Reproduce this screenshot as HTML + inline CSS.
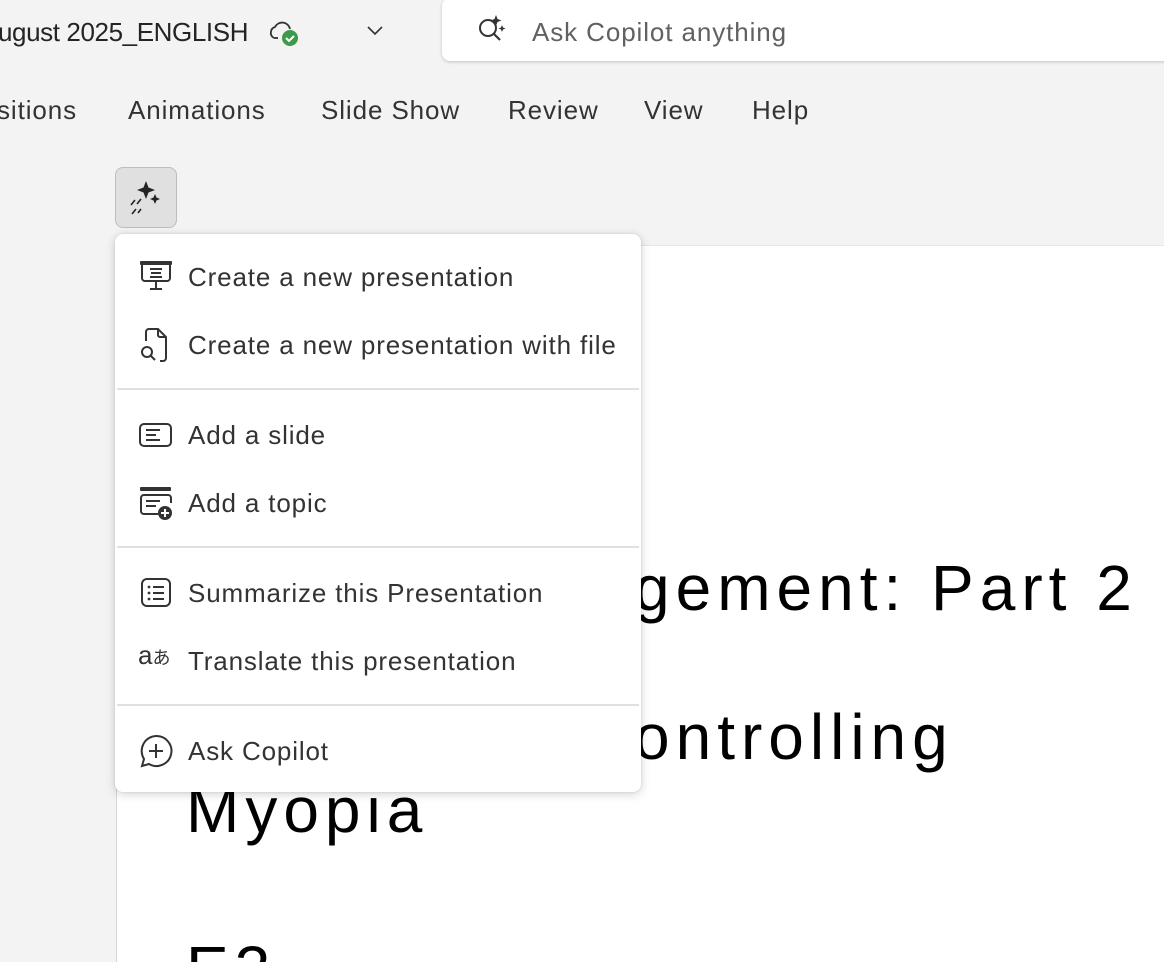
<!DOCTYPE html>
<html style="overflow:hidden;width:1164px;height:962px"><head><style>
body{margin:0;width:1164px;height:962px;overflow:hidden;background:#f3f3f3;font-family:"Segoe UI","Liberation Sans",sans-serif;position:relative;color:#242424}
.a{position:absolute;white-space:nowrap}
.t{font-size:26px;color:#333;letter-spacing:0.9px}
.slide{position:absolute;left:116px;top:245px;width:1048px;height:717px;background:#fff;border-left:1px solid #d6d6d6;border-top:1px solid #e6e6e6}
.st{position:absolute;font-size:64px;color:#000;font-family:"Liberation Sans",sans-serif;white-space:nowrap;letter-spacing:6px}
.menu{position:absolute;left:115px;top:234px;width:526px;height:558px;background:#fff;border-radius:8px;box-shadow:0 2px 10px rgba(0,0,0,.18),0 0 2px rgba(0,0,0,.12)}
.it{position:absolute;left:73px;font-size:26px;color:#333;white-space:nowrap;line-height:30px;letter-spacing:0.85px}
.ic{position:absolute;left:23px;width:36px;height:36px}
.sep{position:absolute;left:2px;right:2px;height:2px;background:#e0e0e0}
</style></head><body>
<div class="a t" style="left:-2px;top:17px;color:#242424;letter-spacing:-0.4px">ugust 2025_ENGLISH</div>
<svg class="a" style="left:266px;top:16px" width="36" height="34" viewBox="0 0 36 34"><path d="M8 22a6 6 0 0 1 1-11 8 8 0 0 1 15 2" fill="none" stroke="#333" stroke-width="1.8"/><path d="M8 22h4" stroke="#333" stroke-width="1.8"/><circle cx="24" cy="22" r="8" fill="#3c9a4a"/><path d="M20 22l3 3 5-5" fill="none" stroke="#fff" stroke-width="2"/></svg>
<svg class="a" style="left:366px;top:25px" width="18" height="12"><path d="M2 2l7 7 7-7" fill="none" stroke="#333" stroke-width="1.6"/></svg>
<div class="a" style="left:442px;top:-2px;width:760px;height:63px;background:#fff;border-radius:8px;box-shadow:0 1px 3px rgba(0,0,0,.2)"></div>
<svg class="a" style="left:476px;top:13px" width="32" height="32" viewBox="0 0 32 32"><circle cx="12" cy="15" r="8" fill="none" stroke="#333" stroke-width="2"/><path d="M18 21l6 6" stroke="#333" stroke-width="2.2"/><path d="M20 2l1.5 4 4 1.5-4 1.5-1.5 4-1.5-4-4-1.5 4-1.5z" fill="#333"/><path d="M26 12l1 2.5 2.5 1-2.5 1-1 2.5-1-2.5-2.5-1 2.5-1z" fill="#333"/></svg>
<div class="a t" style="left:532px;top:17px;color:#616161">Ask Copilot anything</div>
<div class="a t" style="left:-3px;top:95px">sitions</div>
<div class="a t" style="left:128px;top:95px">Animations</div>
<div class="a t" style="left:321px;top:95px">Slide Show</div>
<div class="a t" style="left:508px;top:95px">Review</div>
<div class="a t" style="left:644px;top:95px">View</div>
<div class="a t" style="left:752px;top:95px">Help</div>
<div class="a" style="left:115px;top:167px;width:60px;height:59px;background:#e0e0e0;border:1.5px solid #bdbdbd;border-radius:8px"></div>
<svg class="a" style="left:126px;top:178px" width="40" height="40" viewBox="0 0 40 40"><path d="M20 3l2.5 6.5 6.5 2.5-6.5 2.5-2.5 6.5-2.5-6.5-6.5-2.5 6.5-2.5z" fill="#242424"/><path d="M29 16l1.5 3.5 3.5 1.5-3.5 1.5-1.5 3.5-1.5-3.5-3.5-1.5 3.5-1.5z" fill="#242424"/><path d="M5 27l4-5M11 26l4-5M6 36l4-5M12 35l3-4" stroke="#242424" stroke-width="1.6"/></svg>
<div class="slide"></div>
<div class="st" style="left:634px;top:551px">gement: Part 2</div>
<div class="st" style="left:634px;top:700px">ontrolling</div>
<div class="st" style="left:186px;top:773px">Myopia</div>
<div class="st" style="left:186px;top:932px">E3</div>
<div class="menu">
<svg class="ic" style="top:25px" viewBox="0 0 36 36"><rect x="2" y="2" width="32" height="4" rx="1" fill="#333"/><path d="M4 5v14a3 3 0 0 0 3 3h22a3 3 0 0 0 3-3V5" fill="none" stroke="#333" stroke-width="2"/><path d="M12 10h12M13 14h10M12 18h12M18 22v7M12 30h12" stroke="#333" stroke-width="2"/></svg>
<div class="it" style="top:28px">Create a new presentation</div>
<svg class="ic" style="top:93px" viewBox="0 0 36 36"><path d="M8 14V5a3 3 0 0 1 3-3h9l8 8v21a3 3 0 0 1-3 3h-3M20 2v6a2 2 0 0 0 2 2h6" fill="none" stroke="#333" stroke-width="2"/><circle cx="9" cy="25" r="5" fill="none" stroke="#333" stroke-width="2"/><path d="M13 29l4 4" stroke="#333" stroke-width="2"/></svg>
<div class="it" style="top:96px">Create a new presentation with file</div>
<div class="sep" style="top:154px"></div>
<svg class="ic" style="top:183px" viewBox="0 0 36 36"><rect x="2" y="7" width="31" height="22" rx="4" fill="none" stroke="#333" stroke-width="2"/><path d="M8 13h14M8 18h10M8 23h14" stroke="#333" stroke-width="2"/></svg>
<div class="it" style="top:186px">Add a slide</div>
<svg class="ic" style="top:251px" viewBox="0 0 36 36"><rect x="2" y="2" width="31" height="4" rx="1" fill="#333"/><path d="M20 29H6a3 3 0 0 1-3-3V13a3 3 0 0 1 3-3h24a3 3 0 0 1 3 3v5" fill="none" stroke="#333" stroke-width="2"/><path d="M8 16h14M8 21h10" stroke="#333" stroke-width="2"/><circle cx="27" cy="28" r="7" fill="#333"/><path d="M27 24v8M23 28h8" stroke="#fff" stroke-width="2"/></svg>
<div class="it" style="top:254px">Add a topic</div>
<div class="sep" style="top:312px"></div>
<svg class="ic" style="top:341px" viewBox="0 0 36 36"><rect x="4" y="4" width="28" height="27" rx="5" fill="none" stroke="#333" stroke-width="2"/><circle cx="11" cy="12" r="1.4" fill="#333"/><circle cx="11" cy="18" r="1.4" fill="#333"/><circle cx="11" cy="24" r="1.4" fill="#333"/><path d="M15 12h11M15 18h11M15 24h11" stroke="#333" stroke-width="2"/></svg>
<div class="it" style="top:344px">Summarize this Presentation</div>
<div class="ic" style="top:406px;font-size:26px;color:#333;font-family:'Liberation Sans','Noto Sans CJK JP',sans-serif;line-height:30px">a<span style="font-size:18px">あ</span></div>
<div class="it" style="top:412px">Translate this presentation</div>
<div class="sep" style="top:470px"></div>
<svg class="ic" style="top:499px" viewBox="0 0 36 36"><path d="M18 3a15 15 0 1 1-7 28l-7 2 2-7A15 15 0 0 1 18 3z" fill="none" stroke="#333" stroke-width="2"/><path d="M18 11v14M11 18h14" stroke="#333" stroke-width="2"/></svg>
<div class="it" style="top:502px">Ask Copilot</div>
</div>
</body></html>
